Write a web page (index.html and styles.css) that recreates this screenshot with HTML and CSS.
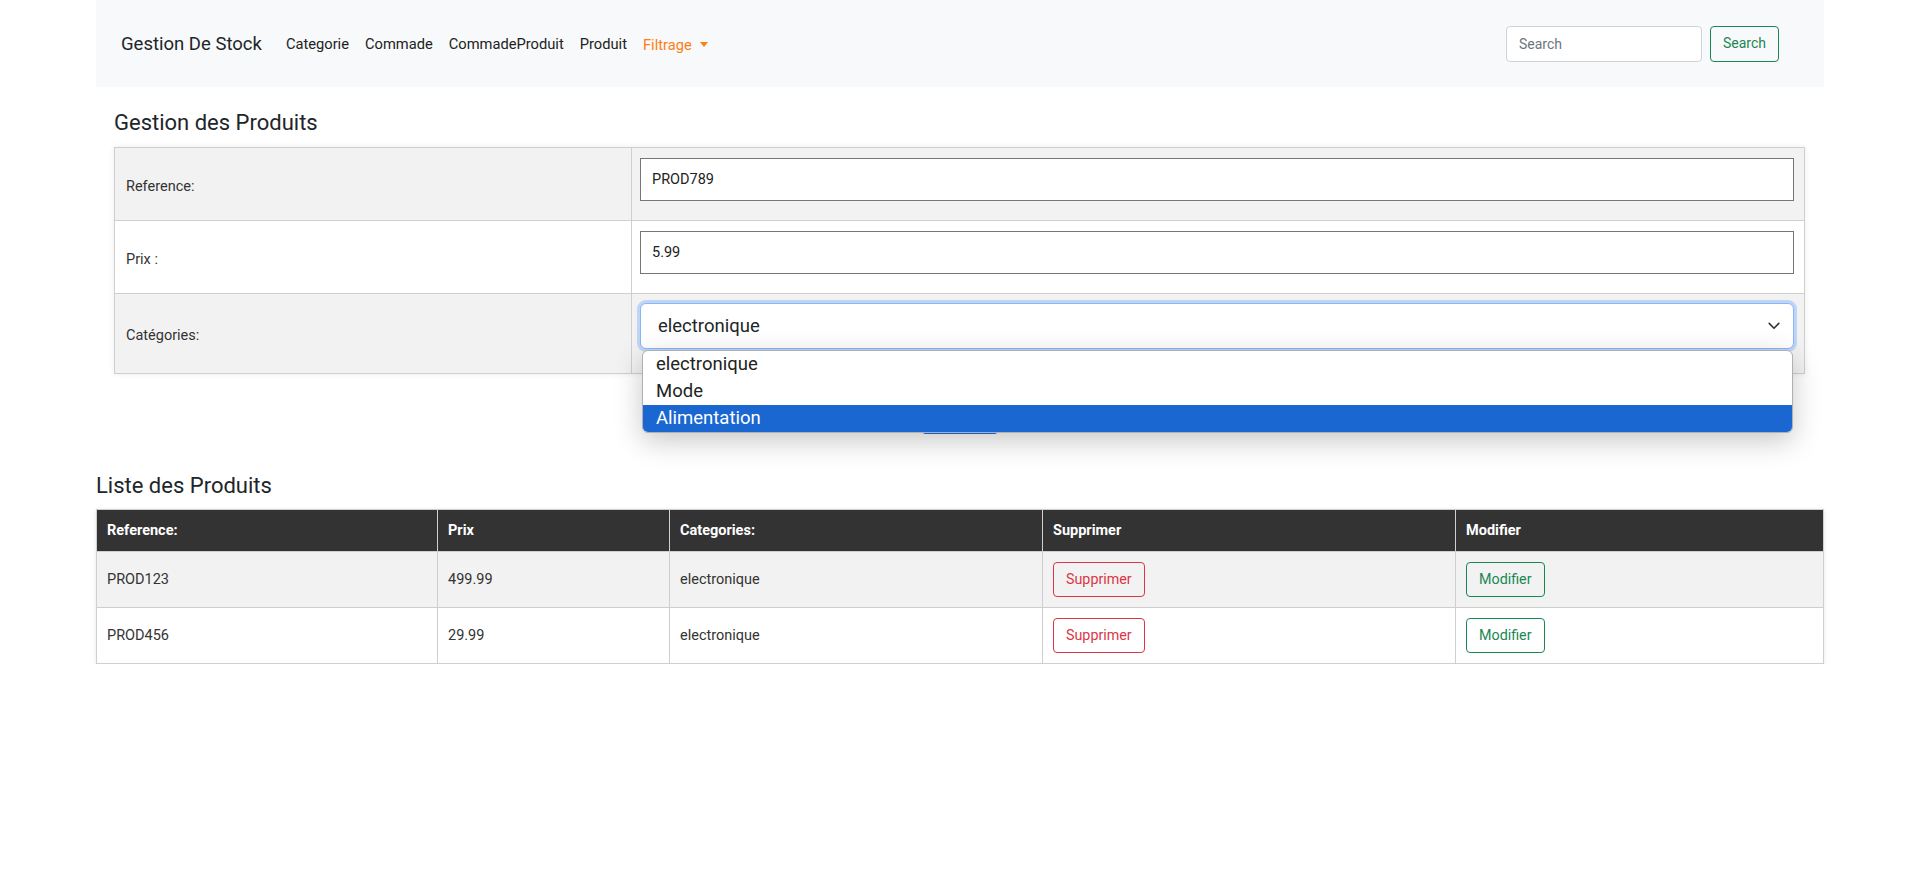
FILE: index.html
```html
<!DOCTYPE html>
<html lang="fr">
<head>
<meta charset="utf-8">
<title>Gestion De Stock</title>
<link rel="stylesheet" href="styles.css">
</head>
<body>
<div class="page">
  <nav class="navbar">
    <a class="brand" href="#">Gestion De Stock</a>
    <ul class="nav">
      <li><a class="nav-link" href="#">Categorie</a></li>
      <li><a class="nav-link" href="#">Commade</a></li>
      <li><a class="nav-link" href="#">CommadeProduit</a></li>
      <li><a class="nav-link" href="#">Produit</a></li>
      <li><a class="nav-link nav-link-accent dropdown-toggle" href="#">Filtrage</a></li>
    </ul>
    <form class="search">
      <input class="search-input" type="search" placeholder="Search">
      <button class="btn btn-outline-success" type="button">Search</button>
    </form>
  </nav>

  <section class="form-section">
    <h2 class="title">Gestion des Produits</h2>
    <table class="form-table">
      <tr class="row-shaded">
        <td class="label-cell">Reference:</td>
        <td class="field-cell"><input class="text-input" type="text" value="PROD789"></td>
      </tr>
      <tr>
        <td class="label-cell">Prix :</td>
        <td class="field-cell"><input class="text-input" type="text" value="5.99"></td>
      </tr>
      <tr class="row-shaded">
        <td class="label-cell">Catégories:</td>
        <td class="field-cell field-cell-select">
          <div class="select-wrap">
            <div class="select">
              <span>electronique</span>
              <svg class="chevron" width="12" height="8" viewBox="0 0 12 8"><path d="M1.2 1.4 L6 6.2 L10.8 1.4" fill="none" stroke="#333" stroke-width="1.6" stroke-linecap="round" stroke-linejoin="round"/></svg>
            </div>
            <ul class="select-popup">
              <li class="option">electronique</li>
              <li class="option">Mode</li>
              <li class="option option-selected">Alimentation</li>
            </ul>
          </div>
        </td>
      </tr>
    </table>
    <div class="actions">
      <button class="btn btn-primary" type="button">Ajouter</button>
    </div>
  </section>

  <section class="list-section">
    <h2 class="title title-list">Liste des Produits</h2>
    <table class="data-table">
      <thead>
        <tr>
          <th class="col-ref">Reference:</th>
          <th class="col-prix">Prix</th>
          <th class="col-cat">Categories:</th>
          <th class="col-del">Supprimer</th>
          <th class="col-edit">Modifier</th>
        </tr>
      </thead>
      <tbody>
        <tr class="row-shaded">
          <td>PROD123</td>
          <td>499.99</td>
          <td>electronique</td>
          <td><button class="btn btn-outline-danger" type="button">Supprimer</button></td>
          <td><button class="btn btn-outline-success" type="button">Modifier</button></td>
        </tr>
        <tr>
          <td>PROD456</td>
          <td>29.99</td>
          <td>electronique</td>
          <td><button class="btn btn-outline-danger" type="button">Supprimer</button></td>
          <td><button class="btn btn-outline-success" type="button">Modifier</button></td>
        </tr>
      </tbody>
    </table>
  </section>
</div>
</body>
</html>
```

FILE: styles.css
```css
* { box-sizing: border-box; }

html, body {
  margin: 0;
  padding: 0;
  background: #fff;
}

body {
  font-family: Roboto, "Liberation Sans", sans-serif;
  font-size: 14.5px;
  color: #212529;
}

.page {
  width: 90%;
  margin: 0 auto;
}

/* Navbar */
.navbar {
  display: flex;
  align-items: center;
  height: 87px;
  padding: 0 45px 0 25px;
  background: #f8f9fa;
}

.brand {
  font-size: 18.5px;
  color: #212529;
  text-decoration: none;
  margin-right: 16px;
  padding-top: 1px;
}

.nav {
  display: flex;
  list-style: none;
  margin: 0;
  padding: 0;
}

.nav-link {
  display: block;
  padding: 8px;
  font-size: 14.7px;
  color: #222;
  text-decoration: none;
}

.nav-link-accent {
  color: #fd7e14;
  padding-top: 9px;
  padding-bottom: 7px;
}

.dropdown-toggle::after {
  content: "";
  display: inline-block;
  margin-left: 8px;
  vertical-align: 3px;
  border-top: 5px solid #fd7e14;
  border-left: 4px solid transparent;
  border-right: 4px solid transparent;
}

.search {
  display: flex;
  gap: 8px;
  margin: 0 0 0 auto;
}

.search-input {
  width: 196px;
  height: 36px;
  padding: 0 12px;
  border: 1px solid #ced4da;
  border-radius: 4px;
  background: #fff;
  font-family: inherit;
  font-size: 14px;
  color: #212529;
}

.search-input::placeholder {
  color: #6c757d;
}

/* Buttons */
.btn {
  display: inline-block;
  height: 35px;
  padding: 0 12px;
  border: 1px solid transparent;
  border-radius: 4px;
  background: transparent;
  font-family: inherit;
  font-size: 14.3px;
  line-height: 33px;
  cursor: pointer;
}

.search .btn {
  height: 36px;
  font-size: 14px;
}

.btn-outline-success {
  color: #198754;
  border-color: #198754;
}

.btn-outline-danger {
  color: #dc3545;
  border-color: #dc3545;
}

.btn-primary {
  width: 80px;
  height: 37px;
  color: #fff;
  background: #0d6efd;
  border-color: #0d6efd;
  border-radius: 6px;
}

/* Sections */
.title {
  margin: 0 0 11px;
  font-size: 22px;
  font-weight: 400;
  line-height: 26px;
  color: #212529;
}

.title-list {
  margin-bottom: 10px;
}

.form-section {
  padding: 23px 19px 0 18px;
}

.form-table {
  width: 100%;
  border-collapse: collapse;
  border: 1px solid #cfcfcf;
  box-shadow: 0 0 6px rgba(0, 0, 0, 0.08);
}

.form-table td {
  border: 1px solid #cfcfcf;
}

.row-shaded {
  background: #f2f2f2;
}

.label-cell {
  width: 517px;
  padding: 4px 11px 0;
  vertical-align: middle;
  color: #333;
  font-size: 14.5px;
}

.field-cell {
  padding: 10px 10px 19px 8px;
}

.field-cell-select {
  padding: 9px 10px 24px 8px;
}

.text-input {
  display: block;
  width: 100%;
  height: 43px;
  padding: 0 11px;
  border: 1px solid #767676;
  border-radius: 0;
  background: #fff;
  font-family: inherit;
  font-size: 14.5px;
  color: #222;
}

.select-wrap {
  position: relative;
}

.select {
  display: flex;
  align-items: center;
  justify-content: space-between;
  height: 46px;
  padding: 0 13px 0 17px;
  border: 1px solid #86b7fe;
  border-radius: 6px;
  background: #fff;
  box-shadow: 0 0 0 3px rgba(13, 110, 253, 0.22);
  font-size: 18.5px;
  color: #212529;
}

.chevron {
  display: block;
}

.select-popup {
  position: absolute;
  top: 47px;
  left: 2px;
  right: 1px;
  z-index: 10;
  margin: 0;
  padding: 0;
  list-style: none;
  background: #fff;
  border: 1px solid #b0b0b0;
  border-radius: 6px;
  overflow: hidden;
  box-shadow: 0 8px 28px rgba(0, 0, 0, 0.22);
}

.option {
  height: 27px;
  padding-left: 13px;
  font-size: 18.5px;
  line-height: 27px;
  color: #222;
}

.option-selected {
  background: #1a67d2;
  color: #fff;
}

.actions {
  margin-top: 23px;
  text-align: center;
}

/* List */
.list-section {
  padding-top: 39px;
}

.data-table {
  width: 100%;
  table-layout: fixed;
  border-collapse: collapse;
  border: 1px solid #cfcfcf;
  box-shadow: 0 1px 4px rgba(0, 0, 0, 0.1);
}

.data-table th,
.data-table td {
  border: 1px solid #cfcfcf;
  padding: 0 10px;
  text-align: left;
}

.data-table th {
  height: 42px;
  background: #333;
  color: #fff;
  font-weight: 700;
  font-size: 14.5px;
}

.data-table td {
  height: 56px;
  color: #333;
  font-size: 14.5px;
}

.col-ref { width: 341px; }
.col-prix { width: 232px; }
.col-cat { width: 373px; }
.col-del { width: 413px; }
.col-edit { width: 368px; }
```
